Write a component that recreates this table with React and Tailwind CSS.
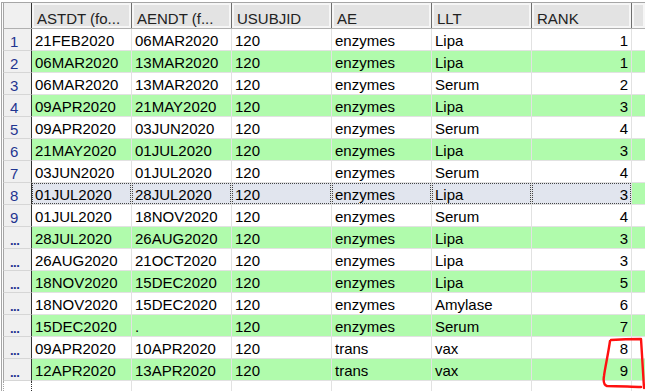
import React from "react";

const rows = [
  ["1", "21FEB2020", "06MAR2020", "120", "enzymes", "Lipa", "1"],
  ["2", "06MAR2020", "13MAR2020", "120", "enzymes", "Lipa", "1"],
  ["3", "06MAR2020", "13MAR2020", "120", "enzymes", "Serum", "2"],
  ["4", "09APR2020", "21MAY2020", "120", "enzymes", "Lipa", "3"],
  ["5", "09APR2020", "03JUN2020", "120", "enzymes", "Serum", "4"],
  ["6", "21MAY2020", "01JUL2020", "120", "enzymes", "Lipa", "3"],
  ["7", "03JUN2020", "01JUL2020", "120", "enzymes", "Serum", "4"],
  ["8", "01JUL2020", "28JUL2020", "120", "enzymes", "Lipa", "3"],
  ["9", "01JUL2020", "18NOV2020", "120", "enzymes", "Serum", "4"],
  ["...", "28JUL2020", "26AUG2020", "120", "enzymes", "Lipa", "3"],
  ["...", "26AUG2020", "21OCT2020", "120", "enzymes", "Lipa", "3"],
  ["...", "18NOV2020", "15DEC2020", "120", "enzymes", "Lipa", "5"],
  ["...", "18NOV2020", "15DEC2020", "120", "enzymes", "Amylase", "6"],
  ["...", "15DEC2020", ".", "120", "enzymes", "Serum", "7"],
  ["...", "09APR2020", "10APR2020", "120", "trans", "vax", "8"],
  ["...", "12APR2020", "13APR2020", "120", "trans", "vax", "9"],
];

const headers = ["ASTDT (fo...", "AENDT (f...", "USUBJID", "AE", "LLT", "RANK"];

function HeaderCell({ label, last }) {
  return (
    <div
      className={
        (last ? "flex-1 border-r-0" : "w-[100px] shrink-0 border-r") +
        " h-full border-[#6e6e6e] bg-[#f6f6f6] p-[2px]"
      }
    >
      <div className="h-full bg-[#e3e3e3] pl-[3px] pt-[6px] leading-[15px] text-[#222] whitespace-nowrap">
        {label}
      </div>
    </div>
  );
}

function DataCell({ text, right, bg, selected, last }) {
  const base =
    (last ? "flex-1" : "w-[100px] shrink-0 border-r") +
    " h-full border-b border-[#e2e2e2]";
  if (selected) {
    return (
      <div className={base}>
        <div
          className={
            "h-full bg-[#e1e5ee] border border-dotted border-[#444] pt-[2px] leading-[17px] whitespace-nowrap " +
            (right ? "text-right pr-[2px]" : "pl-[2px]")
          }
        >
          {text}
        </div>
      </div>
    );
  }
  return (
    <div
      className={
        base +
        " " +
        bg +
        " pt-[3px] leading-[18px] whitespace-nowrap " +
        (right ? "text-right pr-[3px]" : "pl-[3px]")
      }
    >
      {text}
    </div>
  );
}

export default function App() {
  return (
    <div
      className="relative w-[645px] h-[391px] overflow-hidden bg-white text-[15px] text-black"
      style={{ fontFamily: '"Liberation Sans", Arial, sans-serif' }}
    >
      <div className="h-[2px]" />
      <div className="ml-[1px] border-t border-l border-[#a6a6a6] pl-[1px]">
        {/* header */}
        <div className="flex h-[26px] border-b border-[#b0b0b0]">
          <div className="w-[29px] shrink-0 h-full border-l border-[#a6a6a6] bg-[#f0f0f0] border-r-[1px] border-r-[#333]" />
          {headers.map((h) => (
            <HeaderCell key={h} label={h} />
          ))}
          <HeaderCell label="" last />
        </div>
        {rows.map((r, i) => {
          const selected = i === 7;
          const bg = i % 2 === 1 ? "bg-[#b0fbac]" : "bg-white";
          return (
            <div key={i} className="flex h-[22px]">
              <div className="w-[29px] shrink-0 h-full border-l border-[#a6a6a6] bg-[#f0f0f0] border-r border-r-[#333] border-b border-b-[#d6d6d6] pl-[6px] pt-[4px] leading-[17px] text-[#1f3590]">
                {r[0] === "..." ? (
                  <span className="font-bold tracking-[-0.5px] text-[13px]">...</span>
                ) : (
                  r[0]
                )}
              </div>
              {r.slice(1).map((c, j) => (
                <DataCell
                  key={j}
                  text={c}
                  right={j === 5}
                  bg={bg}
                  selected={selected}
                />
              ))}
              <DataCell text="" bg={bg} last />
            </div>
          );
        })}
        {/* partial row */}
        <div className="flex h-[12px]">
          <div className="w-[29px] shrink-0 h-full border-l border-[#a6a6a6] bg-white border-r border-dotted border-r-[#333]" />
          {[0, 1, 2, 3, 4, 5].map((k) => (
            <div key={k} className="w-[100px] shrink-0 h-full border-r border-[#e2e2e2]" />
          ))}
        </div>
      </div>
      <svg
        className="absolute left-0 top-0 pointer-events-none"
        width="645"
        height="391"
        viewBox="0 0 645 391"
      >
        <path
          d="M611 340 C 625 339, 633 339, 641 339 C 642 355, 643 370, 644 388 M610 341 C 608 355, 605 368, 604 376 C 603 382, 604 385, 607 386 C 620 386, 632 387, 641 387"
          fill="none"
          stroke="#ff1010"
          strokeWidth="2.4"
          strokeLinecap="round"
          strokeLinejoin="round"
        />
      </svg>
    </div>
  );
}
